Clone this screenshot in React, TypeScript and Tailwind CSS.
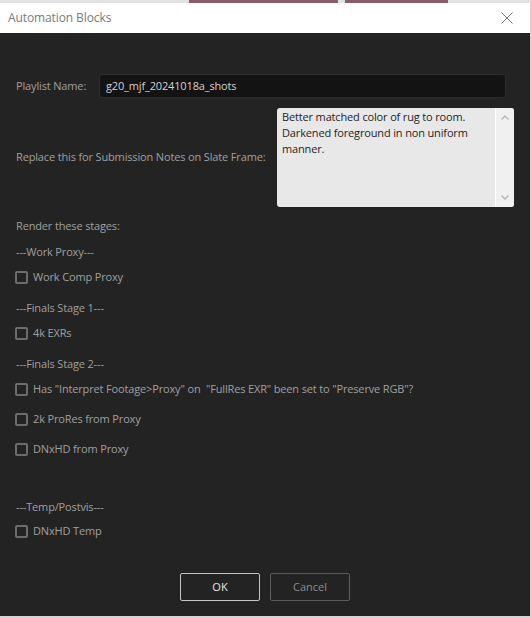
import React from "react";

const font = { fontFamily: '"Open Sans", "Noto Sans", sans-serif' };

function Check({ label }: { label: string }) {
  return (
    <div className="flex items-center h-[20px] -ml-px">
      <div className="w-[13px] h-[13px] border-2 border-[#6c6c6c] rounded-[2px] shrink-0" />
      <span className="ml-[5px] text-[11px] tracking-[-0.15px] text-[#a0a0a0] whitespace-pre">{label}</span>
    </div>
  );
}

function Line({ text, mt }: { text: string; mt: string }) {
  return (
    <div className={`flex items-center h-[20px] text-[11px] tracking-[-0.15px] text-[#a0a0a0] ${mt}`}>{text}</div>
  );
}

export default function App() {
  return (
    <div className="w-[531px] h-[618px] bg-[#d4d4d4] flex flex-col" style={font}>
      <div className="h-[3px] flex shrink-0">
        <div className="w-[189px] bg-[#e2e2e2]" />
        <div className="w-[149px] bg-[#8a5d6e]" />
        <div className="w-[7px] bg-[#e2e2e2]" />
        <div className="w-[103px] bg-[#8a5d6e]" />
        <div className="flex-1 bg-[#e2e2e2]" />
      </div>
      <div className="w-[530px] h-[613px] flex flex-col">
        <div className="h-[30px] bg-white flex items-center justify-between pl-[8px] pr-[17px] shrink-0">
          <span className="text-[12px] tracking-[-0.1px] text-[#7a7a7a]">Automation Blocks</span>
          <svg width="12" height="12" viewBox="0 0 12 12">
            <path d="M0.5 0.5 L11.5 11.5 M11.5 0.5 L0.5 11.5" stroke="#7a7a7a" strokeWidth="1" />
          </svg>
        </div>
        <div className="flex-1 bg-[#232323] flex flex-col pl-[16px]">
          <div className="mt-[41px] flex items-center h-[24px] pr-[24px]">
            <span className="text-[11px] tracking-[-0.15px] text-[#a0a0a0] w-[83px]">Playlist Name:</span>
            <div className="flex-1 h-[24px] bg-[#131313] border border-[#2e2e2e] rounded-[3px] flex items-center pl-[6px] text-[11px] tracking-[-0.15px] text-[#d2d2d2]">
              g20_mjf_20241018a_shots
            </div>
          </div>
          <div className="mt-[10px] flex items-center justify-between h-[99px] pr-[16px]">
            <span className="text-[11px] tracking-[-0.15px] text-[#a0a0a0]">Replace this for Submission Notes on Slate Frame:</span>
            <div className="w-[237px] h-[99px] bg-[#e8e8e8] rounded-[3px] flex overflow-hidden">
              <div className="flex-1 pl-[5px] pt-[1px] text-[11px] tracking-[-0.15px] leading-[16px] text-[#1e1e1e]">
                Better matched color of rug to room.
                <br />
                Darkened foreground in non uniform
                <br />
                manner.
              </div>
              <div className="w-[19px] bg-[#f0f0f0] border-l border-white flex flex-col items-center justify-between py-[7px]">
                <svg width="8" height="5" viewBox="0 0 8 5">
                  <path d="M0.5 4.5 L4 1 L7.5 4.5" stroke="#b8b8b8" strokeWidth="1.5" fill="none" />
                </svg>
                <svg width="8" height="5" viewBox="0 0 8 5">
                  <path d="M0.5 0.5 L4 4 L7.5 0.5" stroke="#b8b8b8" strokeWidth="1.5" fill="none" />
                </svg>
              </div>
            </div>
          </div>
          <Line text="Render these stages:" mt="mt-[9px]" />
          <Line text="---Work Proxy---" mt="mt-[6px]" />
          <div className="mt-[5px]"><Check label="Work Comp Proxy" /></div>
          <Line text="---Finals Stage 1---" mt="mt-[11px]" />
          <div className="mt-[5px]"><Check label="4k EXRs" /></div>
          <Line text="---Finals Stage 2---" mt="mt-[11px]" />
          <div className="mt-[5px]"><Check label={'Has "Interpret Footage>Proxy" on  "FullRes EXR" been set to "Preserve RGB"?'} /></div>
          <div className="mt-[10px]"><Check label="2k ProRes from Proxy" /></div>
          <div className="mt-[10px]"><Check label="DNxHD from Proxy" /></div>
          <Line text="---Temp/Postvis---" mt="mt-[38px]" />
          <div className="mt-[4px]"><Check label="DNxHD Temp" /></div>
          <div className="mt-[32px] flex gap-[10px] pl-[164px]">
            <div className="w-[80px] h-[28px] border border-[#c4c4c4] rounded-[2px] flex items-center justify-center text-[11px] text-[#e6e6e6]">
              OK
            </div>
            <div className="w-[80px] h-[28px] border border-[#5c5c5c] rounded-[2px] flex items-center justify-center text-[11px] text-[#8c8c8c]">
              Cancel
            </div>
          </div>
        </div>
      </div>
    </div>
  );
}
